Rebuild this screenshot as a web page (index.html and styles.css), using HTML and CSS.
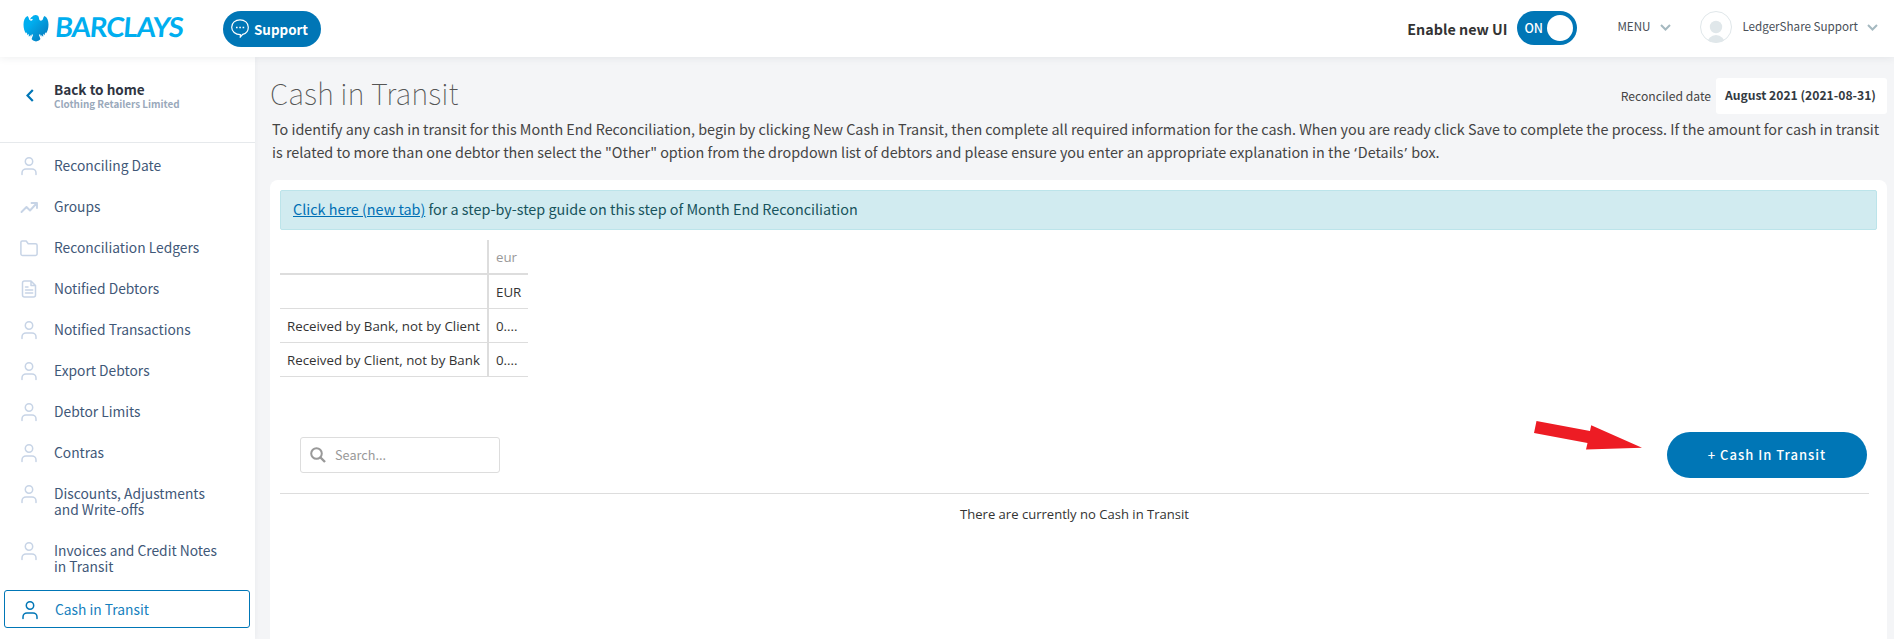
FILE: index.html
```html
<!DOCTYPE html>
<html lang="en"><head><meta charset="utf-8"><title>Cash in Transit</title><link rel="stylesheet" href="styles.css"></head>
<body>
<svg width="0" height="0" class="defs"><defs>
<symbol id="user" viewBox="0 0 18 20"><circle cx="9" cy="5.500" r="3.700"/><path d="M2 18.500v-1.600c0-2.200 1.800-3.900 4-3.900h6c2.200 0 4 1.700 4 3.900v1.600"/></symbol>
</defs></svg>
<header class="topbar">
  <svg class="eagle" width="26" height="28" viewBox="0 0 26 28"><defs><linearGradient id="g" x1="0" y1="0" x2="1" y2="1"><stop offset="0.3" stop-color="#00aeef"/><stop offset="1" stop-color="#0872b5"/></linearGradient></defs><path fill="url(#g)" d="M9 3C10 .8 13.500.2 15.200 2c1 1.200.6 2.800 1.300 4 .8 1 2.600.9 3.300-.4.5-1.300.6-2.900 1.700-3.600C24.200 3.300 25.500 6.500 25.500 10.500c0 4-1 7-2.500 9l-.8-1.300-.7 3-1.300-1.500v3l-1.900-1.600-.3 3.300c-1 1.400-3 2.600-5 3.100-2-.5-4-1.700-5-3.100l-.3-3.300-1.900 1.600v-3L4.500 21.200l-.7-3-.8 1.300c-1.500-2-2.500-5-2.500-9C.5 6.500 1.800 3.300 4.500 2c1.100.7 1.200 2.300 1.700 3.600.7 1.300 2.500 1.400 3.300.4.300-.6.1-1.200-.4-1.300L7.200 5.600C7.200 4.200 8 3.300 9 3z"/><path d="M7.500 26l2-5.500M18.500 26l-2-5.500" stroke="#fff" stroke-width="1.300"/></svg>
  <div class="brand"><span>BARCLAYS</span></div>
  <button class="support"><svg width="18" height="19" viewBox="0 0 18 19" fill="none" stroke="#fff" stroke-width="1.200"><path d="M9 .8c4.700 0 8.300 3.200 8.300 7.400 0 3.700-2.700 6.400-5.600 7.200L9.300 18v-2.300C4.300 15.700.7 12.400.7 8.200.7 4 4.300.8 9 .8z"/><path d="M5 8.500h1.600M8.300 8.500h1.600M11.600 8.500h1.600" stroke-width="1.600"/></svg><span>Support</span></button>
  <div class="grow"></div>
  <span class="enable">Enable new UI</span>
  <span class="toggle"><b>ON</b><i></i></span>
  <span class="menu">MENU</span><svg class="chev" width="11" height="7" viewBox="0 0 11 7"><path d="M1 1l4.500 4.500L10 1"/></svg>
  <svg class="avatar" width="34" height="34" viewBox="0 0 34 34"><clipPath id="cp"><circle cx="17" cy="17" r="15.500"/></clipPath><circle cx="17" cy="17" r="15.500" fill="#fff" stroke="#e0e7ea"/><g clip-path="url(#cp)" fill="#e0e7ea"><circle cx="17" cy="17" r="6.200"/><circle cx="17" cy="34" r="9"/></g></svg>
  <span class="who">LedgerShare Support</span><svg class="chev last" width="11" height="7" viewBox="0 0 11 7"><path d="M1 1l4.500 4.500L10 1"/></svg>
</header>
<div class="body">
<aside class="side">
  <div class="home"><svg width="8" height="13" viewBox="0 0 8 13"><path d="M6.800 1L1.500 6.500l5.300 5.500" fill="none" stroke="#0076b6" stroke-width="2.200"/></svg><div><strong>Back to home</strong><small>Clothing Retailers Limited</small></div></div>
  <nav>
    <a><svg class="ic"><use href="#user"/></svg><span>Reconciling Date</span></a>
    <a><svg class="ic" viewBox="0 0 18 20"><path d="M1.500 15l5-5 3.500 3.500L16 7M11.500 6H17v5" stroke-width="1.900"/></svg><span>Groups</span></a>
    <a><svg class="ic" viewBox="0 0 18 20"><path d="M.9 4.300Q.9 3 2.200 3h4l2 2.700h7.200Q17.100 5.700 17.100 7.300v8.500q0 1.600-1.600 1.600H2.500q-1.600 0-1.600-1.600z"/></svg><span>Reconciliation Ledgers</span></a>
    <a><svg class="ic" viewBox="0 0 18 20"><path d="M11 2H4.500Q2.500 2 2.500 4v12q0 2 2 2h9q2 0 2-2V6.500zM11 2v4.500h4.500M5.500 8H8M5.500 11h7.200M5.500 14h7.200"/></svg><span>Notified Debtors</span></a>
    <a><svg class="ic"><use href="#user"/></svg><span>Notified Transactions</span></a>
    <a><svg class="ic"><use href="#user"/></svg><span>Export Debtors</span></a>
    <a><svg class="ic"><use href="#user"/></svg><span>Debtor Limits</span></a>
    <a><svg class="ic"><use href="#user"/></svg><span>Contras</span></a>
    <a><svg class="ic"><use href="#user"/></svg><span>Discounts, Adjustments<br>and Write-offs</span></a>
    <a><svg class="ic"><use href="#user"/></svg><span>Invoices and Credit Notes<br>in Transit</span></a>
    <a class="active"><svg class="ic"><use href="#user"/></svg><span>Cash in Transit</span></a>
  </nav>
</aside>
<main>
  <div class="head"><h1>Cash in Transit</h1><div class="rec"><span>Reconciled date</span><b>August 2021 (2021-08-31)</b></div></div>
  <p class="intro">To identify any cash in transit for this Month End Reconciliation, begin by clicking New Cash in Transit, then complete all required information for the cash. When you are ready click Save to complete the process. If the amount for cash in transit<br>is related to more than one debtor then select the "Other" option from the dropdown list of debtors and please ensure you enter an appropriate explanation in the <i>‘</i>Details<i>’</i> box.</p>
  <section class="panel">
    <div class="alert"><a>Click here (new tab)</a> for a step-by-step guide on this step of Month End Reconciliation</div>
    <table><tr class="th"><td></td><td>eur</td></tr><tr><td></td><td>EUR</td></tr><tr><td>Received by Bank, not by Client</td><td>0....</td></tr><tr><td>Received by Client, not by Bank</td><td>0....</td></tr></table>
    <div class="tools"><div class="search"><svg width="16" height="16" viewBox="0 0 16 16" fill="none" stroke="#999"><circle cx="6.500" cy="6.500" r="5.300" stroke-width="2"/><path d="M10.500 10.500l4.500 4.500" stroke-width="2.400"/></svg><span>Search...</span></div>
    <svg class="arrow" width="110" height="30" viewBox="0 0 110 30"><path fill="#ed1c24" d="M3.500 1L57 11l1.200-5.700L109 27.700l-56 1.800 1.500-6.500L1 13z"/></svg>
    <button class="add">+ Cash In Transit</button></div>
    <div class="empty">There are currently no Cash in Transit</div>
  </section>
</main></div>
</body></html>
```
FILE: styles.css
```css
* { box-sizing: border-box; }
body { margin: 0; height: 639px; overflow: hidden; background: #f4f5f7; font: 14px/20px "Noto Sans CJK SC", "Noto Sans", sans-serif; color: #333; }
.defs { position: absolute; }
button { border: 0; font: inherit; padding: 0; }
.topbar { position: relative; z-index: 2; height: 57px; background: #fff; display: flex; align-items: center; box-shadow: 0 1px 8px rgba(40,50,60,.08); }
.grow { flex: 1; }
.eagle { margin: 0 0 2px 23px; }
.brand { margin: -4px 0 0 6px; width: 130px; font: 700 27.500px/30px Lato, sans-serif; color: #00aeef; letter-spacing: -1px; transform: skewX(-5deg); white-space: nowrap; }
.support { margin-left: 38px; width: 98px; height: 36px; border-radius: 18px; background: #0076b6; color: #fff; font-weight: 700; font-size: 13.400px; display: flex; align-items: center; padding-left: 8px; gap: 5px; }
.enable { font-weight: 700; font-size: 14.300px; margin-right: 10px; }
.toggle { width: 60px; height: 34px; border-radius: 17px; background: #0076b6; color: #fff; display: flex; align-items: center; padding: 0 4px 0 7px; justify-content: space-between; margin-top: -1px; }
.toggle b { font-size: 12.500px; font-weight: 500; }
.toggle i { width: 26px; height: 26px; border-radius: 50%; background: #fff; }
.menu { margin: -5px 10px 0 40px; font-size: 11.600px; color: #4a5058; }
.who { font-size: 11.650px; margin: -5px 9px 0 9px; color: #4a5058; }
.chev { fill: none; stroke: #a5b9c0; stroke-width: 2; margin-top: -3px; }
.avatar { margin: -3px 0 0 28px; }
.last { margin-right: 16px; }
.body { display: flex; height: 582px; }
.side { width: 255px; background: #fff; box-shadow: 0 0 6px rgba(40,50,60,.06); }
.home { height: 86px; border-bottom: 1px solid #e6e9ec; display: flex; padding: 23px 0 0 26px; gap: 20px; }
.home svg { margin-top: 9px; }
.home strong { display: block; font-size: 13.550px; line-height: 18px; color: #2f3542; }
.home small { display: block; font-size: 9.850px; line-height: 13px; font-weight: 700; color: #9aa9bb; }
nav { padding-top: 2px; }
nav a { display: flex; padding: 12px 0 13px 20px; gap: 16px; line-height: 16px; font-size: 13.800px; color: #3f5878; }
.ic { width: 18px; height: 20px; fill: none; stroke: #c7d4e6; stroke-width: 1.500; stroke-linecap: round; stroke-linejoin: round; margin: -1px 0 -3px; flex: none; }
nav a.active { margin: 3px 5px 0 4px; border: 1px solid #0076b6; border-radius: 3px; padding: 10px 0 11px 16px; height: 38px; color: #1580bd; }
.active .ic { stroke: #0076b6; }
main { flex: 1; min-width: 0; padding: 19px 7px 0 15px; display: flex; flex-direction: column; }
.head { display: flex; justify-content: space-between; height: 39px; }
h1 { margin: -1px 0 0; font-size: 29.400px; line-height: 34px; font-weight: 100; color: #555; }
.rec { display: flex; align-items: center; gap: 5px; margin-top: 2px; height: 36px; font-size: 12.150px; line-height: 18px; color: #444; }
.rec b { width: 171px; height: 36px; line-height: 34px; padding-right: 2px; background: #fff; border-radius: 3px; text-align: center; color: #333a42; }
.intro { margin: 2px 0 0 2px; font-size: 14.370px; line-height: 23px; white-space: nowrap; color: #444; }
.intro i { font-family: "Noto Sans", sans-serif; font-style: normal; padding: 0 1px; }
.panel { margin-top: 16px; flex: 1; background: #fff; border-radius: 8px 8px 0 0; padding: 10px 10px 0; }
.alert { height: 40px; border: 1px solid #bce4ea; border-radius: 2px; background: #d1ebf0; color: #17535c; padding-left: 12px; line-height: 36px; font-size: 14.390px; }
.alert a { color: #0070b5; text-decoration: underline; }
table { margin-top: 10px; border-collapse: separate; border-spacing: 0; width: 248px; table-layout: fixed; font: 13.300px/20px "Open Sans", sans-serif; }
td { height: 34px; padding: 0 7px; border-bottom: 1px solid #ddd; white-space: nowrap; }
td:first-child { width: 209px; border-right: 2px solid #ddd; }
.th td { height: 35px; border-bottom: 2px solid #ddd; color: #999; }
.tools { display: flex; align-items: center; height: 117px; padding: 40px 2px 0 20px; border-bottom: 1px solid #ddd; margin-right: 8px; }
.search { width: 200px; height: 36px; border: 1px solid #ddd; border-radius: 3px; display: flex; align-items: center; gap: 9px; padding-left: 9px; color: #999; font-size: 12.700px; }
.arrow { margin-left: auto; margin-right: 24px; margin-top: -40px; }
.add { width: 200px; height: 46px; border-radius: 23px; background: #0076b6; color: #fff; font-weight: 500; font-size: 13px; letter-spacing: 1px; }
.empty { text-align: center; padding-top: 10px; margin-right: 8px; font: 13.050px/20px "Open Sans", sans-serif; }
```
